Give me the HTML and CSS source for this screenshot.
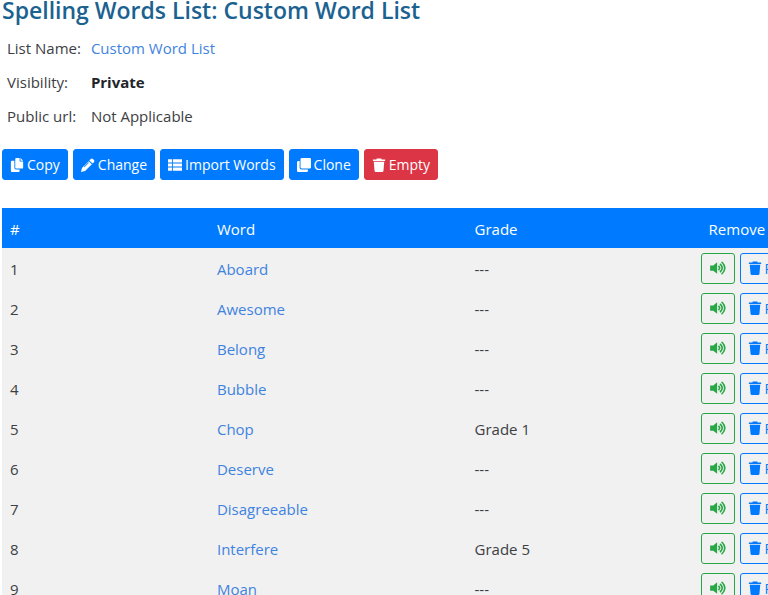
FILE: index.html
```html
<!DOCTYPE html>
<html lang="en">
<head>
    <meta charset="UTF-8">
    <meta name="viewport" content="width=device-width, initial-scale=1.0">
    <title>Spelling Words List: Custom Word List</title>
    <link rel="stylesheet" href="styles.css">
</head>
<body>
    <!-- shared icons -->
    <svg class="icon-defs" aria-hidden="true">
        <symbol id="icon-trash" viewBox="0 0 14 16">
            <path d="M4.5 0.5h5l0.6 1.3H14v1.5H0V1.8h3.9zM1 4.2h12l-0.9 10.4q-0.1 1.4-1.5 1.4H3.4q-1.4 0-1.5-1.4z"/>
        </symbol>
        <symbol id="icon-volume" viewBox="0 0 18 16">
            <path d="M0 5h3.6L8 1.300v13.400l-4.400-3.700H0z"/>
            <path class="wave" d="M10 6.200q1.800 1.800 0 3.600M11.800 3.900q4 4.100 0 8.200M13.600 1.500q6.400 6.500 0 13"/>
        </symbol>
    </svg>

    <h1>Spelling Words List: Custom Word List</h1>

    <table class="details">
        <tr>
            <th scope="row">List Name:</th>
            <td><a href="#">Custom Word List</a></td>
        </tr>
        <tr>
            <th scope="row">Visibility:</th>
            <td><strong>Private</strong></td>
        </tr>
        <tr>
            <th scope="row">Public url:</th>
            <td>Not Applicable</td>
        </tr>
    </table>

    <div class="toolbar">
        <button class="btn">
            <svg class="icon" viewBox="0 0 14 16" aria-hidden="true"><path d="M6 0h4v4h4v7q0 1-1 1H6q-1 0-1-1V1q0-1 1-1zM11 0l3 3h-3zM1.2 3H4v8.5Q4 13 5.5 13H10v1.8Q10 16 8.8 16H1.2Q0 16 0 14.8V4.2Q0 3 1.2 3z"/></svg>
            Copy
        </button>
        <button class="btn">
            <svg class="icon" viewBox="0 0 16 16" aria-hidden="true"><path d="M11.2 1.2q1.2-1.2 2.4 0l1.2 1.2q1.2 1.2 0 2.4L13.2 6.4 9.6 2.8zM8.8 3.6l3.600 3.600-7.700 7.700L0 16l1.100-4.700zM4 10.500l5-5-.6-.6-5 5z" fill-rule="evenodd"/></svg>
            Change
        </button>
        <button class="btn">
            <svg class="icon" viewBox="0 0 16 16" aria-hidden="true"><path d="M0 1.5h4.5v3.6H0zM5.5 1.5H16v3.6H5.5zM0 6.2h4.5v3.6H0zM5.5 6.2H16v3.6H5.5zM0 10.9h4.5v3.6H0zM5.5 10.9H16v3.6H5.5z"/></svg>
            Import Words
        </button>
        <button class="btn">
            <svg class="icon" viewBox="0 0 16 16" aria-hidden="true"><path d="M5.5 0h9Q16 0 16 1.5v9q0 1.500-1.500 1.500h-9Q4 12 4 10.500v-9Q4 0 5.500 0zM1.500 3.500H3v7.500q0 2 2 2h7.500v1.500q0 1.500-1.500 1.500H1.500Q0 16 0 14.500V5q0-1.500 1.500-1.500z"/></svg>
            Clone
        </button>
        <button class="btn btn-danger">
            <svg class="icon" aria-hidden="true"><use href="#icon-trash"/></svg>
            Empty
        </button>
    </div>

    <div class="table-container">
        <table class="words">
            <thead>
                <tr>
                    <th class="col-number">#</th>
                    <th class="col-word">Word</th>
                    <th class="col-grade">Grade</th>
                    <th>Remove</th>
                </tr>
            </thead>
            <tbody id="word-rows"></tbody>
        </table>
    </div>

    <script>
        const words = [
            { word: 'Aboard', grade: '---' },
            { word: 'Awesome', grade: '---' },
            { word: 'Belong', grade: '---' },
            { word: 'Bubble', grade: '---' },
            { word: 'Chop', grade: 'Grade 1' },
            { word: 'Deserve', grade: '---' },
            { word: 'Disagreeable', grade: '---' },
            { word: 'Interfere', grade: 'Grade 5' },
            { word: 'Moan', grade: '---' }
        ];

        document.getElementById('word-rows').innerHTML = words.map((item, index) => `
            <tr>
                <td>${index + 1}</td>
                <td><a href="#">${item.word}</a></td>
                <td>${item.grade}</td>
                <td class="actions">
                    <div class="action-buttons">
                        <button class="btn btn-listen" aria-label="Listen to ${item.word}"><svg class="icon icon-volume" aria-hidden="true"><use href="#icon-volume"/></svg></button>
                        <button class="btn btn-remove"><svg class="icon" aria-hidden="true"><use href="#icon-trash"/></svg>Remove</button>
                    </div>
                </td>
            </tr>
        `).join('');
    </script>
</body>
</html>
```
FILE: styles.css
```css
* {
    box-sizing: border-box;
}

body {
    margin: 0;
    padding-left: 2px;
    height: 100vh;
    overflow: hidden;
    background-color: #fff;
    color: #3c4043;
    font-family: "Open Sans", "Noto Sans", sans-serif;
    font-size: 15px;
    line-height: 24px;
}

a {
    color: #3f83e0;
    text-decoration: none;
}

a:hover {
    text-decoration: underline;
}

h1 {
    margin: 0 0 11px;
    color: #1b6291;
    font-size: 23px;
    font-weight: 600;
    line-height: 20px;
}

table {
    border-collapse: collapse;
    text-align: left;
}

th {
    font-weight: 400;
}

.details th,
.details td {
    padding: 5px;
}

.details strong {
    color: #212529;
}

.toolbar {
    display: flex;
    gap: 5px;
    margin: 16px 0 28px;
}

.btn {
    display: flex;
    align-items: center;
    gap: 3px;
    height: 31px;
    padding: 0 7px;
    border: 1px solid #007bff;
    border-radius: 3px;
    background-color: #007bff;
    color: #fff;
    font-family: inherit;
    font-size: 14px;
    white-space: nowrap;
    cursor: pointer;
}

.btn-danger {
    border-color: #dc3545;
    background-color: #dc3545;
}

.icon {
    flex: none;
    width: 14px;
    height: 14px;
    fill: currentColor;
}

.icon-volume {
    width: 16px;
}

.wave {
    fill: none;
    stroke: currentColor;
    stroke-width: 1.8;
    stroke-linecap: round;
}

.icon-defs {
    display: none;
}

/* the list is wider than the window and is cut at its right edge */
.table-container {
    overflow: hidden;
}

.words {
    width: 114%;
    table-layout: fixed;
}

.words th,
.words td {
    height: 40px;
    padding: 2px 8px 0;
}

.words thead {
    background-color: #007bff;
    color: #fff;
}

.words tbody {
    background-color: #f1f1f1;
}

.words .actions {
    padding: 0;
}

.col-number {
    width: 23.7%;
}

.col-word {
    width: 29.5%;
}

.col-grade {
    width: 26.8%;
}

.action-buttons {
    display: flex;
    gap: 5px;
}

.btn-listen {
    padding: 0 8px;
    border-color: #28a745;
    background-color: transparent;
    color: #28a745;
}

.btn-remove {
    background-color: transparent;
    color: #007bff;
}
```
